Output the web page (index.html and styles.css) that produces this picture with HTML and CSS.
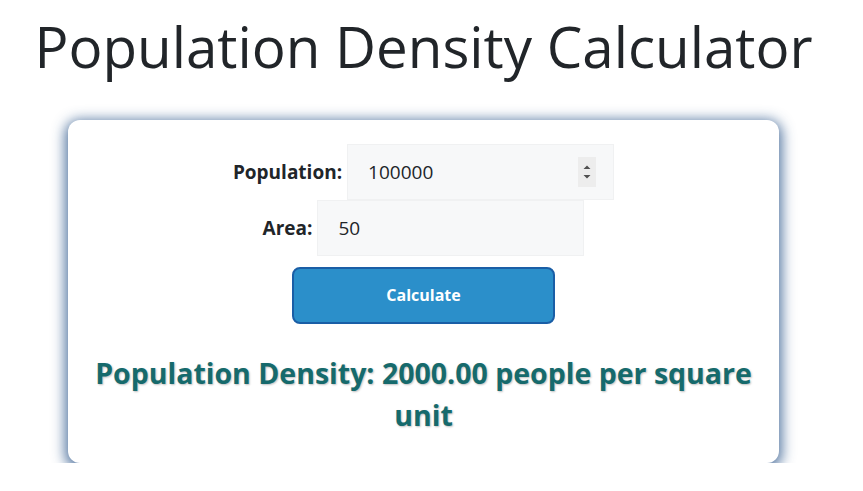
FILE: index.html
```html
<!DOCTYPE html>
<html lang="en">
<head>
    <meta charset="UTF-8">
    <meta name="viewport" content="width=device-width, initial-scale=1.0">
    <title>Population Density Calculator</title>
    <link rel="stylesheet" href="styles.css">
</head>
<body>
    <h1>Population Density Calculator</h1>

    <div class="calculator">
        <div class="form-row">
            <label for="population">Population:</label>
            <span class="number-wrap">
                <input type="number" id="population" class="field field-number" value="100000">
                <span class="spinner">
                    <svg width="10" height="20" viewBox="0 0 10 20"><path d="M1.5 7 L5 3.5 L8.5 7 Z M1.5 13 L5 16.5 L8.5 13 Z" fill="#505050"/></svg>
                </span>
            </span>
        </div>
        <div class="form-row">
            <label for="area">Area:</label>
            <input type="text" id="area" class="field" value="50">
        </div>
        <button id="btn-calc" class="btn">Calculate</button>
        <div id="result" class="result">Population Density: 2000.00 people per square unit</div>
    </div>

    <script>
        document.getElementById('btn-calc').addEventListener('click', function() {
            const population = parseFloat(document.getElementById('population').value);
            const area = parseFloat(document.getElementById('area').value);
            const result = document.getElementById('result');

            if (isNaN(population) || isNaN(area) || area <= 0) {
                result.textContent = 'Please enter valid numbers.';
                return;
            }

            const density = population / area;
            result.textContent = `Population Density: ${density.toFixed(2)} people per square unit`;
        });
    </script>
</body>
</html>
```

FILE: styles.css
```css
* {
    margin: 0;
    padding: 0;
    box-sizing: border-box;
    font-family: 'Open Sans', 'Noto Sans', sans-serif;
}

body {
    background-color: #fff;
    color: #212529;
    padding: 13px 16px 0 0;
}

h1 {
    text-align: center;
    font-size: 56.5px;
    font-weight: 400;
    line-height: 1.2;
    margin-bottom: 39px;
}

.calculator {
    width: 711px;
    margin: 0 auto;
    background-color: white;
    border-radius: 12px;
    box-shadow: 0 3px 13px 3px rgba(55, 95, 145, 0.85);
    padding: 24px 20px 27px;
    text-align: center;
}

.form-row {
    display: flex;
    justify-content: center;
    align-items: center;
    gap: 5px;
}

.form-row label {
    font-weight: 700;
    font-size: 19px;
}

.number-wrap {
    position: relative;
    display: inline-block;
}

.field {
    display: block;
    width: 267px;
    height: 56px;
    padding: 0 20px;
    font-size: 19px;
    color: #212529;
    background-color: #f7f8f9;
    border: 1px solid #f0f1f2;
    -moz-appearance: textfield;
}

.field::-webkit-inner-spin-button,
.field::-webkit-outer-spin-button {
    -webkit-appearance: none;
    margin: 0;
}

.spinner {
    position: absolute;
    top: 13px;
    right: 18px;
    width: 18px;
    height: 30px;
    background-color: #ededed;
    display: flex;
    align-items: center;
    justify-content: center;
    pointer-events: none;
}

.btn {
    display: block;
    margin: 11px auto 0;
    width: 263px;
    height: 57px;
    background-color: #2b8fca;
    color: white;
    border: 2px solid #1a5ea6;
    border-radius: 8px;
    font-size: 16px;
    font-weight: 700;
    cursor: pointer;
}

.btn:hover {
    background-color: #247bb0;
}

.result {
    margin-top: 28px;
    color: #166a6c;
    font-size: 28.5px;
    font-weight: 700;
    line-height: 1.48;
    text-shadow: 1px 1px 2px rgba(0, 0, 0, 0.25);
}
```
